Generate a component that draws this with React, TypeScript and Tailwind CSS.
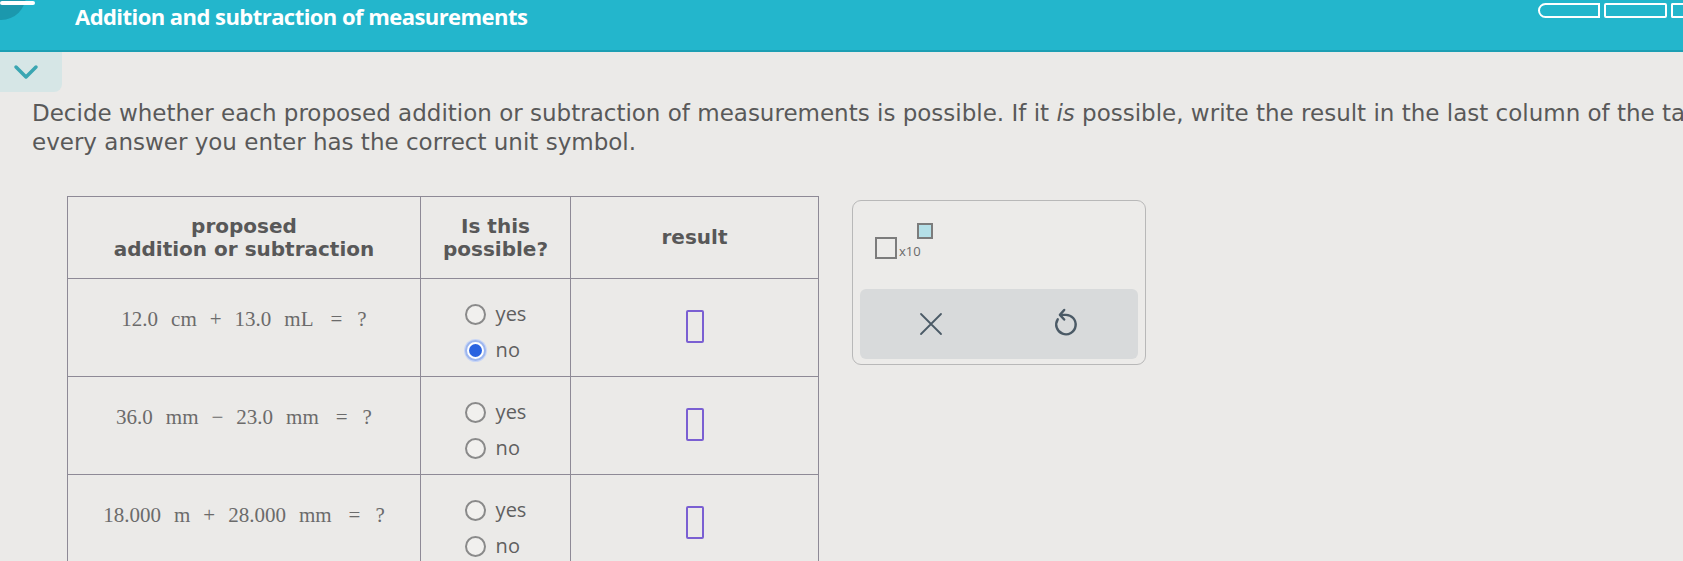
const sans = "font-['DejaVu_Sans','Liberation_Sans',sans-serif]";
const serif = "font-['Liberation_Serif','Times_New_Roman',serif]";
const ui = "font-['Open_Sans','Liberation_Sans',sans-serif]";

const rows = [
  { parts: ["12.0", "cm", "+", "13.0", "mL"], choice: "no" },
  { parts: ["36.0", "mm", "−", "23.0", "mm"], choice: "" },
  { parts: ["18.000", "m", "+", "28.000", "mm"], choice: "" },
];

function Radio({ label, checked }: { label: string; checked?: boolean }) {
  return (
    <label className="flex items-center gap-[10px] h-[36px]">
      {checked ? (
        <span className="w-[21px] h-[21px] rounded-full border-2 border-[#9db6ee] bg-white flex items-center justify-center shadow-[0_0_0_1px_#c9d6f5]">
          <span className="w-[13px] h-[13px] rounded-full bg-[#2a63e0]" />
        </span>
      ) : (
        <span className="w-[21px] h-[21px] rounded-full border-2 border-[#8a8a8a] bg-[#f1f0ee]" />
      )}
      <span className={`${ui} text-[20px] leading-none text-[#5f5f5f]`}>{label}</span>
    </label>
  );
}

function Formula({ parts }: { parts: string[] }) {
  return (
    <span className={`${serif} inline-flex items-baseline gap-[13px] text-[21px] text-[#6b6b6b]`}>
      <span>{parts[0]}</span>
      <span>{parts[1]}</span>
      <span>{parts[2]}</span>
      <span>{parts[3]}</span>
      <span>{parts[4]}</span>
      <span className="ml-[4px]">=</span>
      <span className="ml-[2px]">?</span>
    </span>
  );
}

function UndoIcon() {
  return (
    <svg width="30" height="34" viewBox="0 0 24 28" fill="none" stroke="#4b5a66" strokeWidth="2" strokeLinecap="round" strokeLinejoin="round">
      <path d="M7.5 6.5 H11.5 A8 8 0 1 1 5.2 10.2" />
      <path d="M10.5 2.5 L7 6.5 L10.5 10.3" />
    </svg>
  );
}

export default function App() {
  return (
    <div className="relative w-full h-[561px] overflow-hidden bg-[#ebeae8]">
      {/* top bar */}
      <header className="relative h-[52px] bg-[#23b6cc] border-b-2 border-[#1c9fb3] flex items-start pl-[75px] pt-[2px]">
        <div className="absolute left-[-24px] top-[-30px] w-[50px] h-[50px] rounded-full bg-[#1b98ad]" />
        <div className="absolute left-0 top-[1px] w-[35px] h-[4px] rounded-full bg-white" />
        <h1 className={`${ui} font-bold text-[22px] leading-[28px] text-white tracking-[-0.55px]`}>
          Addition and subtraction of measurements
        </h1>
        <div className="absolute right-0 top-[3px] flex gap-[4px]">
          <div className="w-[62px] h-[15px] border-2 border-white rounded-l-full rounded-r-[2px]" />
          <div className="w-[63px] h-[15px] border-2 border-white rounded-[2px]" />
          <div className="w-[12px] h-[15px] border-2 border-r-0 border-white rounded-l-[2px]" />
        </div>
      </header>

      {/* collapse tab */}
      <div className="w-[62px] h-[40px] bg-[#d6e6e6] rounded-br-[8px] flex items-center pl-[13px]">
        <svg width="26" height="16" viewBox="0 0 26 16" fill="none">
          <path d="M3 3 L13 13 L23 3" stroke="#3aa6b2" strokeWidth="3.5" strokeLinecap="round" strokeLinejoin="round" />
        </svg>
      </div>

      {/* instructions */}
      <p className={`${sans} mt-[7px] pl-[32px] text-[23px] leading-[29px] text-[#595959] whitespace-nowrap`}>
        Decide whether each proposed addition or subtraction of measurements is possible. If it <i>is</i> possible, write the result in the last column of the table. Make sure
        <br />
        every answer you enter has the correct unit symbol.
      </p>

      <div className="flex items-start mt-[39px] pl-[67px] gap-[33px]">
        <table className="border-collapse border border-[#8e8a96] text-center">
          <thead>
            <tr className="h-[82px]">
              <th className={`${sans} w-[353px] border border-[#8e8a96] font-bold text-[20px] leading-[23px] text-[#585858]`}>
                proposed
                <br />
                addition or subtraction
              </th>
              <th className={`${sans} w-[150px] border border-[#8e8a96] font-bold text-[20px] leading-[23px] text-[#585858]`}>
                Is this
                <br />
                possible?
              </th>
              <th className={`${sans} w-[248px] border border-[#8e8a96] font-bold text-[20px] leading-[23px] text-[#585858]`}>
                result
              </th>
            </tr>
          </thead>
          <tbody>
            {rows.map((r, i) => (
              <tr key={i} className="h-[98px]">
                <td className="border border-[#8e8a96] align-top pt-[25px]">
                  <Formula parts={r.parts} />
                </td>
                <td className="border border-[#8e8a96] align-top pt-[17px]">
                  <div className="inline-flex flex-col items-start">
                    <Radio label="yes" checked={r.choice === "yes"} />
                    <Radio label="no" checked={r.choice === "no"} />
                  </div>
                </td>
                <td className="border border-[#8e8a96] align-top pt-[31px]">
                  <div className="mx-auto w-[18px] h-[33px] border-2 border-[#7a5fd2] rounded-[2px]" />
                </td>
              </tr>
            ))}
          </tbody>
        </table>

        {/* answer tools */}
        <div className="mt-[4px] w-[294px] h-[165px] rounded-[9px] border border-[#b8b8b8] bg-[#ecebe9] px-[7px] pt-[22px] flex flex-col">
          <div className="flex items-start pl-[15px] h-[66px]">
            <div className="mt-[14px] w-[22px] h-[22px] border-2 border-[#7c7c7c]" />
            <span className={`${ui} mt-[22px] ml-[2px] text-[13px] leading-none text-[#6a6a6a]`}>x10</span>
            <div className="-ml-[4px] w-[16px] h-[16px] border-2 border-[#7c7c7c] bg-[#b5e0e8]" />
          </div>
          <div className="h-[70px] rounded-[6px] bg-[#d8dadb] flex items-center pl-[59px] gap-[108px]">
            <svg width="24" height="24" viewBox="0 0 24 24" fill="none" stroke="#4b5a66" strokeWidth="1.8" strokeLinecap="round">
              <path d="M2 2 L22 22 M22 2 L2 22" />
            </svg>
            <UndoIcon />
          </div>
        </div>
      </div>
    </div>
  );
}
